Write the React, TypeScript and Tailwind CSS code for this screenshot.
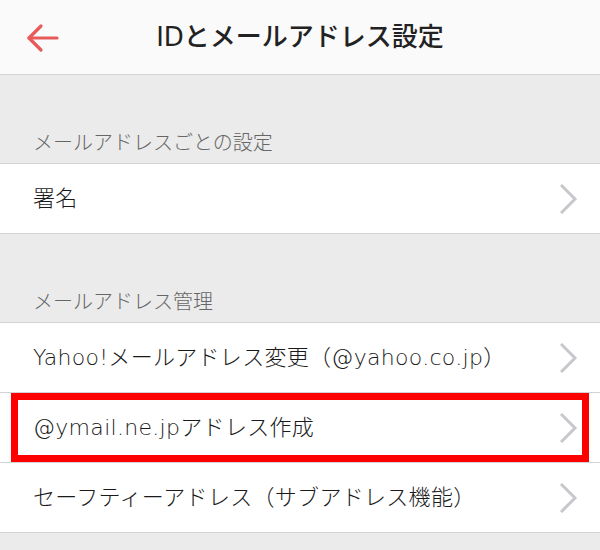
const font = { fontFamily: '"DejaVu Sans", "Noto Sans CJK JP", sans-serif' }

type Item = { label: string; highlight?: boolean }

const sections: { title: string; items: Item[] }[] = [
  { title: 'メールアドレスごとの設定', items: [{ label: '署名' }] },
  {
    title: 'メールアドレス管理',
    items: [
      { label: 'Yahoo!メールアドレス変更（@yahoo.co.jp）' },
      { label: '@ymail.ne.jpアドレス作成', highlight: true },
      { label: 'セーフティーアドレス（サブアドレス機能）' },
    ],
  },
]

function BackArrow() {
  return (
    <svg width="34" height="30" viewBox="0 0 34 30" fill="none" stroke="#e85a5a" strokeWidth="3.2" strokeLinecap="round" strokeLinejoin="round">
      <path d="M3 15 H31" />
      <path d="M15 3 L3 15 L15 27" />
    </svg>
  )
}

function Chevron() {
  return (
    <svg width="18" height="30" viewBox="0 0 18 30" fill="none" stroke="#c7c7cc" strokeWidth="3" strokeLinecap="square" strokeLinejoin="miter">
      <path d="M2 2 L15 15 L2 28" />
    </svg>
  )
}

function Row({ item }: { item: Item }) {
  return (
    <div className="relative flex h-[70px] items-center justify-between border-b border-[#d3d3d3] bg-white pl-[33px] pr-[22px]">
      <span className="text-[22px] font-light leading-none tracking-[0.3px] text-[#1a1a1a]">{item.label}</span>
      <Chevron />
      {item.highlight && (
        <div className="pointer-events-none absolute left-[11px] right-[11px] top-[0px] bottom-[0px] border-[7px] border-[#ff0000]" />
      )}
    </div>
  )
}

export default function App() {
  return (
    <div className="h-[550px] w-[600px] overflow-hidden bg-[#ebebeb]" style={font}>
      <header className="relative flex h-[75px] items-center justify-center border-b border-[#d3d3d3] bg-[#fafafa]">
        <div className="absolute left-[26px] top-[23px]">
          <BackArrow />
        </div>
        <h1 className="text-[26px] font-medium leading-none text-[#222]">IDとメールアドレス設定</h1>
      </header>
      {sections.map(sec => (
        <section key={sec.title}>
          <div className="flex h-[89px] items-end border-b border-[#d3d3d3] pb-[10px] pl-[33px]">
            <span className="text-[20px] font-light leading-none text-[#666]">{sec.title}</span>
          </div>
          {sec.items.map(it => (
            <Row key={it.label} item={it} />
          ))}
        </section>
      ))}
    </div>
  )
}
